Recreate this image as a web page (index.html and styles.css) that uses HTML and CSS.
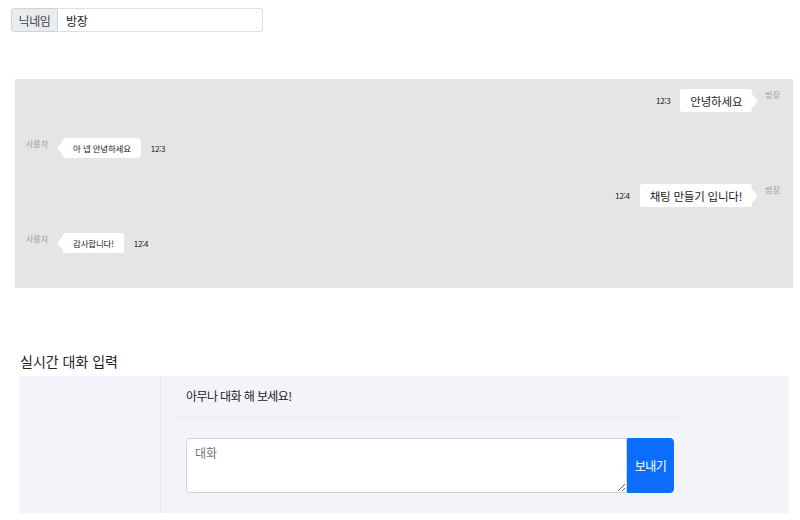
FILE: index.html
```html
<!DOCTYPE html>
<html lang="ko">
<head>
<meta charset="utf-8">
<link rel="stylesheet" href="styles.css">
</head>
<body>
<div class="nick-group">
  <span class="nick-label">닉네임</span>
  <span class="nick-input">방장</span>
</div>

<div class="chat">
  <div class="row row-me">
    <span class="time">12:3</span>
    <div class="bubble big">안녕하세요</div>
    <span class="name">방장</span>
  </div>
  <div class="row row-other">
    <span class="name">사용자</span>
    <div class="bubble small">아 넵 안녕하세요</div>
    <span class="time">12:3</span>
  </div>
  <div class="row row-me">
    <span class="time">12:4</span>
    <div class="bubble big">채팅 만들기 입니다!</div>
    <span class="name">방장</span>
  </div>
  <div class="row row-other">
    <span class="name">사용자</span>
    <div class="bubble small">감사합니다!</div>
    <span class="time">12:4</span>
  </div>
</div>

<h2 class="section-title">실시간 대화 입력</h2>
<div class="panel">
  <div class="panel-side"></div>
  <div class="panel-main">
    <div class="panel-inner">
      <p class="hint">아무나 대화 해 보세요!</p>
      <div class="compose">
        <textarea class="msg" placeholder="대화"></textarea>
        <button class="send">보내기</button>
      </div>
    </div>
  </div>
</div>
</body>
</html>
```

FILE: styles.css
```css
* { box-sizing: border-box; }
body {
  margin: 0;
  padding: 8px 7px 0 11px;
  font-family: "Noto Sans CJK KR", "Noto Sans", sans-serif;
  color: #212529;
  background: #fff;
}
.nick-group {
  display: flex;
  width: 252px;
  height: 24px;
}
.nick-label {
  width: 47px;
  display: flex;
  align-items: center;
  justify-content: center;
  background: #e9ecef;
  border: 1px solid #ced4da;
  border-radius: 3px 0 0 3px;
  font-size: 12px;
  letter-spacing: -0.4px;
  color: #444;
}
.nick-input {
  flex: 1;
  display: flex;
  align-items: center;
  padding-left: 8px;
  border: 1px solid #dee2e6;
  border-left: none;
  border-radius: 0 3px 3px 0;
  font-size: 12px;
  letter-spacing: -0.4px;
  color: #222;
}
.chat {
  margin: 47px 0 0 4px;
  width: 778px;
  height: 209px;
  background: #e5e5e5;
  padding: 10px 13px 0 11px;
  display: flex;
  flex-direction: column;
  gap: 26px;
}
.row {
  display: flex;
  align-items: flex-start;
}
.row-me { justify-content: flex-end; }
.name {
  font-size: 8px;
  color: #9a9a9a;
  line-height: 12px;
}
.row-me .name { margin-top: 0; margin-left: 13px; }
.row-other .name { margin-top: 0; margin-right: 15px; }
.time {
  font-size: 8px;
  color: #111;
  align-self: center;
  letter-spacing: -0.3px;
}
.row-me .time { margin-right: 10px; }
.row-other .time { margin-left: 10px; }
.bubble {
  position: relative;
  background: #fff;
  border-radius: 3px;
  padding: 0 10px;
  display: flex;
  align-items: center;
  color: #222;
}
.bubble.big { height: 23px; font-size: 11.5px; letter-spacing: -0.2px; }
.bubble.small { height: 20px; font-size: 8.5px; letter-spacing: -0.2px; }
.bubble::after {
  content: "";
  position: absolute;
  top: 50%;
  transform: translateY(-50%);
  border-top: 7px solid transparent;
  border-bottom: 7px solid transparent;
}
.row-me .bubble::after {
  right: -6px;
  border-left: 6px solid #fff;
}
.row-other .bubble::after {
  left: -6px;
  border-right: 6px solid #fff;
}
.section-title {
  margin: 64px 0 6px 9px;
  font-size: 14px;
  font-weight: 400;
  line-height: 18px;
  color: #222;
}
.panel {
  margin-left: 8px;
  width: 770px;
  height: 137px;
  background: #f3f4f9;
  display: flex;
}
.panel-side {
  width: 142px;
  border-right: 1px solid #e6e8ee;
}
.panel-main {
  flex: 1;
  padding-left: 15px;
}
.panel-inner {
  width: 508px;
}
.hint {
  margin: 0;
  padding: 12px 10px 0;
  height: 42px;
  font-size: 12px;
  line-height: 16px;
  letter-spacing: -0.6px;
  color: #222;
  border-bottom: 1px solid #e8eaef;
}
.compose {
  display: flex;
  margin: 20px 10px 0;
  height: 55px;
}
.msg {
  flex: 1;
  resize: vertical;
  border: 1px solid #ced4da;
  border-radius: 4px 0 0 4px;
  padding: 5px 8px;
  font-family: inherit;
  font-size: 12px;
  background: #fff;
  outline: none;
}
.msg::placeholder { color: #6c757d; }
.send {
  width: 47px;
  border: 1px solid #0d6efd;
  background: #0d6efd;
  color: #fff;
  border-radius: 0 4px 4px 0;
  font-family: inherit;
  font-size: 12px;
  letter-spacing: -0.5px;
  padding: 0;
}
```
